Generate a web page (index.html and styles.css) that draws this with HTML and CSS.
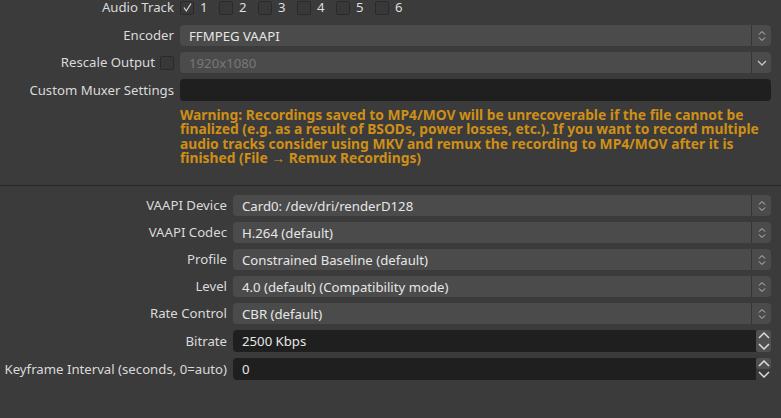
FILE: index.html
```html
<!DOCTYPE html>
<html>
<head>
<meta charset="utf-8">
<link rel="stylesheet" href="styles.css">
</head>
<body>
<div class="page">
  <section class="top">
    <div class="row row-audio">
      <div class="label">Audio Track</div>
      <div class="tracks">
        <span class="track"><span class="cb"><svg width="11" height="11" viewBox="0 0 11 11"><polyline points="2,5.5 4.3,9 9,1.5" fill="none" stroke="#d8d8d8" stroke-width="1.2"/></svg></span><span class="num">1</span></span>
        <span class="track"><span class="cb"></span><span class="num">2</span></span>
        <span class="track"><span class="cb"></span><span class="num">3</span></span>
        <span class="track"><span class="cb"></span><span class="num">4</span></span>
        <span class="track"><span class="cb"></span><span class="num">5</span></span>
        <span class="track"><span class="cb"></span><span class="num">6</span></span>
      </div>
    </div>
    <div class="row">
      <div class="label">Encoder</div>
      <div class="combo"><span class="val">FFMPEG VAAPI</span><span class="arrows"><svg width="8" height="12" viewBox="0 0 8 12"><polyline points="1,4.5 4,1.5 7,4.5" fill="none" stroke="#c4c4c4" stroke-width="1"/><polyline points="1,7.5 4,10.5 7,7.5" fill="none" stroke="#c4c4c4" stroke-width="1"/></svg></span></div>
    </div>
    <div class="row">
      <div class="label with-cb">Rescale Output<span class="cb"></span></div>
      <div class="combo disabled"><span class="val">1920x1080</span><span class="arrows"><svg width="10" height="6" viewBox="0 0 10 6"><polyline points="1,1 5,5 9,1" fill="none" stroke="#c4c4c4" stroke-width="1.3"/></svg></span></div>
    </div>
    <div class="row">
      <div class="label">Custom Muxer Settings</div>
      <div class="input"></div>
    </div>
    <div class="row">
      <div></div>
      <p class="warning">Warning: Recordings saved to MP4/MOV will be unrecoverable if the file cannot be<br>finalized (e.g. as a result of BSODs, power losses, etc.). If you want to record multiple<br>audio tracks consider using MKV and remux the recording to MP4/MOV after it is<br>finished (File → Remux Recordings)</p>
    </div>
  </section>

  <section class="bottom">
    <div class="row">
      <div class="label">VAAPI Device</div>
      <div class="combo"><span class="val">Card0: /dev/dri/renderD128</span><span class="arrows"><svg width="8" height="12" viewBox="0 0 8 12"><polyline points="1,4.5 4,1.5 7,4.5" fill="none" stroke="#c4c4c4" stroke-width="1"/><polyline points="1,7.5 4,10.5 7,7.5" fill="none" stroke="#c4c4c4" stroke-width="1"/></svg></span></div>
    </div>
    <div class="row">
      <div class="label">VAAPI Codec</div>
      <div class="combo"><span class="val">H.264 (default)</span><span class="arrows"><svg width="8" height="12" viewBox="0 0 8 12"><polyline points="1,4.5 4,1.5 7,4.5" fill="none" stroke="#c4c4c4" stroke-width="1"/><polyline points="1,7.5 4,10.5 7,7.5" fill="none" stroke="#c4c4c4" stroke-width="1"/></svg></span></div>
    </div>
    <div class="row">
      <div class="label">Profile</div>
      <div class="combo"><span class="val">Constrained Baseline (default)</span><span class="arrows"><svg width="8" height="12" viewBox="0 0 8 12"><polyline points="1,4.5 4,1.5 7,4.5" fill="none" stroke="#c4c4c4" stroke-width="1"/><polyline points="1,7.5 4,10.5 7,7.5" fill="none" stroke="#c4c4c4" stroke-width="1"/></svg></span></div>
    </div>
    <div class="row">
      <div class="label">Level</div>
      <div class="combo"><span class="val">4.0 (default) (Compatibility mode)</span><span class="arrows"><svg width="8" height="12" viewBox="0 0 8 12"><polyline points="1,4.5 4,1.5 7,4.5" fill="none" stroke="#c4c4c4" stroke-width="1"/><polyline points="1,7.5 4,10.5 7,7.5" fill="none" stroke="#c4c4c4" stroke-width="1"/></svg></span></div>
    </div>
    <div class="row">
      <div class="label">Rate Control</div>
      <div class="combo"><span class="val">CBR (default)</span><span class="arrows"><svg width="8" height="12" viewBox="0 0 8 12"><polyline points="1,4.5 4,1.5 7,4.5" fill="none" stroke="#c4c4c4" stroke-width="1"/><polyline points="1,7.5 4,10.5 7,7.5" fill="none" stroke="#c4c4c4" stroke-width="1"/></svg></span></div>
    </div>
    <div class="row">
      <div class="label">Bitrate</div>
      <div class="spin">
        <div class="spin-field">2500 Kbps</div>
        <div class="spin-btns both">
          <span class="sb up"><svg width="12" height="7" viewBox="0 0 12 7"><polyline points="1,6 6,1 11,6" fill="none" stroke="#dcdcdc" stroke-width="1.5"/></svg></span>
          <span class="sb down"><svg width="12" height="7" viewBox="0 0 12 7"><polyline points="1,1 6,6 11,1" fill="none" stroke="#dcdcdc" stroke-width="1.5"/></svg></span>
        </div>
      </div>
    </div>
    <div class="row">
      <div class="label">Keyframe Interval (seconds, 0=auto)</div>
      <div class="spin">
        <div class="spin-field">0</div>
        <div class="spin-btns">
          <span class="sb up lit"><svg width="12" height="7" viewBox="0 0 12 7"><polyline points="1,6 6,1 11,6" fill="none" stroke="#dcdcdc" stroke-width="1.5"/></svg></span>
          <span class="sb down"><svg width="12" height="7" viewBox="0 0 12 7"><polyline points="1,1 6,6 11,1" fill="none" stroke="#dcdcdc" stroke-width="1.5"/></svg></span>
        </div>
      </div>
    </div>
  </section>
</div>
</body>
</html>
```

FILE: styles.css
```css
html, body {
  margin: 0;
  padding: 0;
  background: #3b3b3b;
}

body {
  width: 781px;
  height: 418px;
  overflow: hidden;
  font-family: "Noto Sans", "Open Sans", sans-serif;
  font-size: 13.2px;
  color: #dedede;
}

.page {
  display: flex;
  flex-direction: column;
}

.top {
  display: flex;
  flex-direction: column;
  gap: 6px;
  padding: 0 10px 20px 0;
  border-bottom: 1px solid #262626;
}

.top .row {
  display: grid;
  grid-template-columns: 174px 1fr;
  column-gap: 6px;
  align-items: center;
}

.row-audio {
  height: 15px;
  margin-bottom: 4px;
}

.bottom {
  display: flex;
  flex-direction: column;
  gap: 6px;
  padding: 9px 10px 0 0;
}

.bottom .row {
  display: grid;
  grid-template-columns: 227px 1fr;
  column-gap: 6px;
  align-items: center;
}

.label {
  text-align: right;
  white-space: nowrap;
  line-height: 15px;
  color: #dadada;
}

.label.with-cb {
  display: flex;
  justify-content: flex-end;
  align-items: center;
  gap: 5px;
}

.tracks {
  display: flex;
  align-items: center;
}

.track {
  width: 39px;
  display: flex;
  align-items: center;
  gap: 6px;
}

.num {
  line-height: 15px;
}

.cb {
  box-sizing: border-box;
  width: 14px;
  height: 14px;
  border: 1px solid #2a2a2a;
  border-radius: 2px;
  background: #383838;
  display: flex;
  align-items: center;
  justify-content: center;
}

.combo {
  height: 21px;
  display: flex;
  align-items: center;
  background: #4b4b4b;
  border-radius: 4px;
  color: #e6e6e6;
}

.combo .val {
  flex: 1;
  padding-left: 9px;
  white-space: nowrap;
}

.combo.disabled .val {
  color: #787878;
}

.combo .arrows {
  width: 19px;
  height: 100%;
  border-left: 1px solid #353535;
  display: flex;
  align-items: center;
  justify-content: center;
}

.input {
  height: 22px;
  background: #1f1f1f;
  border-radius: 4px;
}

.warning {
  margin: 0;
  padding-top: 1px;
  font-weight: bold;
  font-size: 13.8px;
  line-height: 14.3px;
  color: #cf8f17;
  white-space: nowrap;
}

.spin {
  height: 22px;
  display: flex;
}

.spin-field {
  flex: 1;
  background: #1f1f1f;
  border-radius: 4px 0 0 4px;
  padding-left: 9px;
  line-height: 22px;
  color: #e6e6e6;
}

.spin-btns {
  width: 15px;
  display: flex;
  flex-direction: column;
  border-radius: 3px;
}

.spin-btns.both {
  background: #505050;
}

.sb {
  flex: 1;
  display: flex;
  align-items: center;
  justify-content: center;
}

.sb.lit {
  background: #505050;
  border-radius: 3px;
}
```
